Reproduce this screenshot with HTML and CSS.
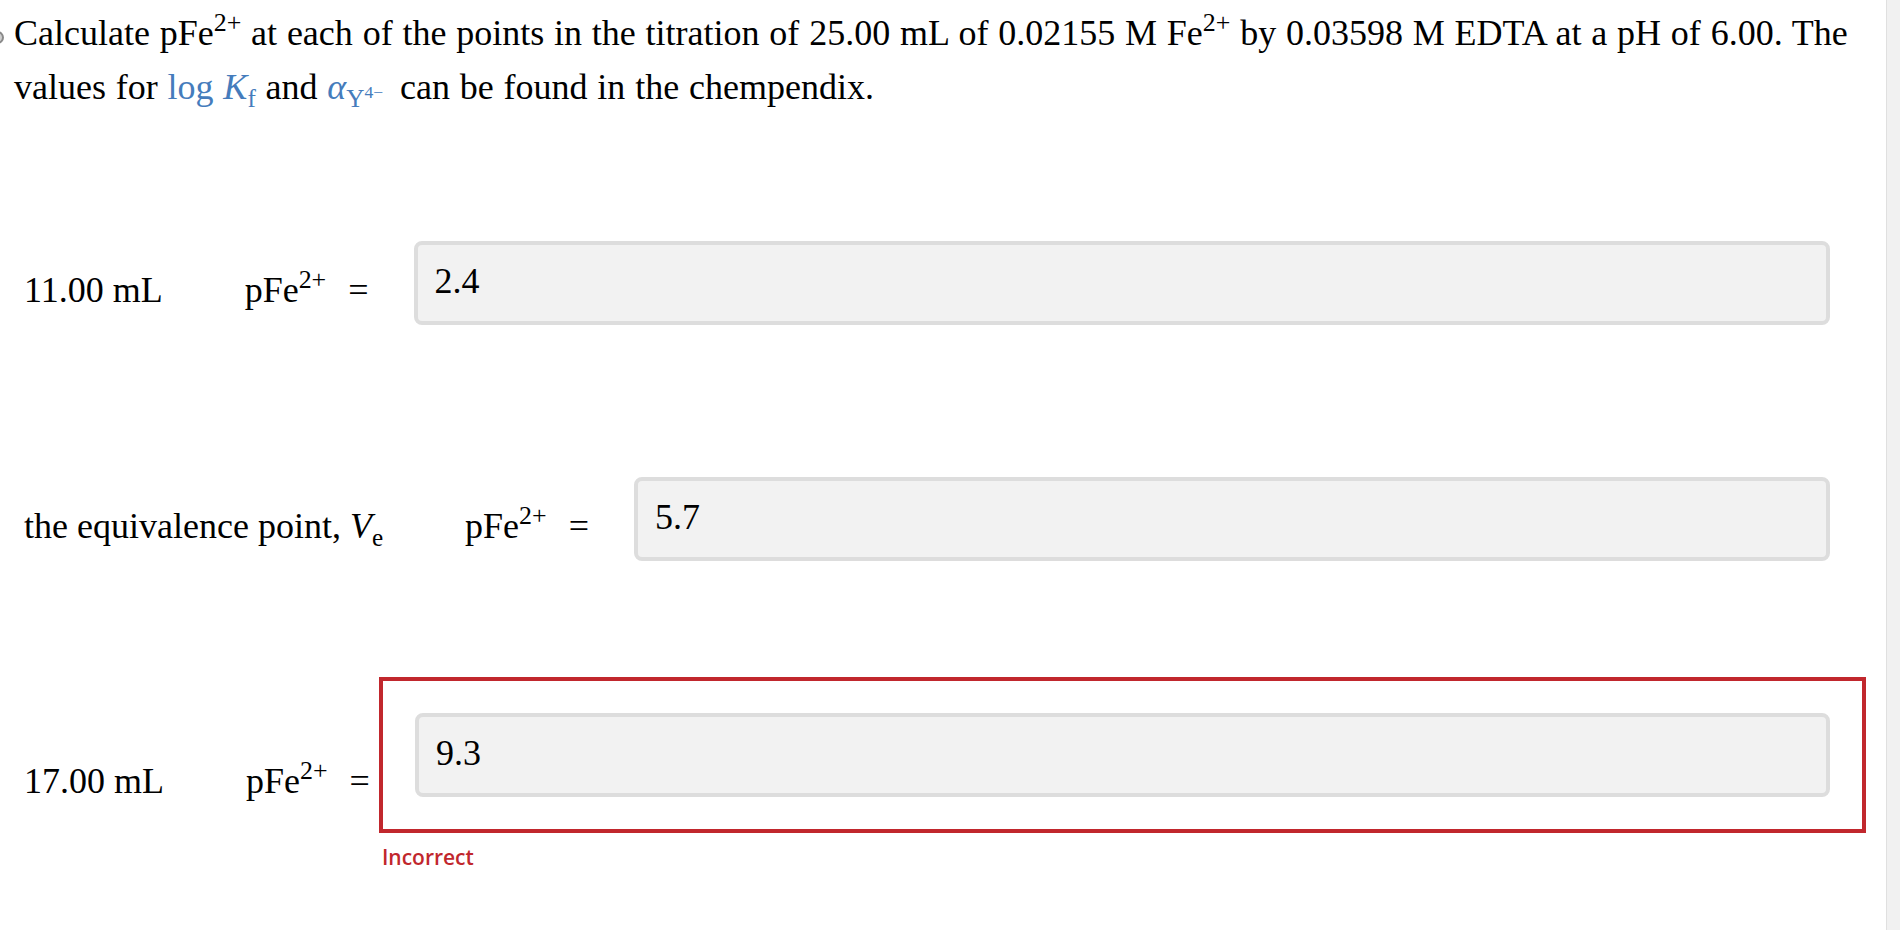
FILE: index.html
```html
<!DOCTYPE html>
<html lang="en">
<head>
<meta charset="utf-8">
<title>Titration pFe</title>
<link rel="stylesheet" href="styles.css">
</head>
<body>
<div class="scroll-track"></div>
<span class="edge-icon"></span>
<main class="question">
  <p class="prompt">Calculate pFe<sup>2+</sup> at each of the points in the titration of 25.00 mL of 0.02155 M Fe<sup>2+</sup> by 0.03598 M EDTA at a pH of 6.00. The values for <span class="ref">log <i>K</i><sub>f</sub></span> and <span class="ref alpha"><i>α</i><sub>Y<sup class="tiny">4−</sup></sub></span> can be found in the chempendix.</p>
  <div class="rows">
    <div class="row">
      <div class="label">
        <span class="point">11.00 mL</span>
        <span class="quantity">pFe<sup>2+</sup><span class="eq">=</span></span>
      </div>
      <div class="answer">
        <div class="frame"><div class="field">2.4</div></div>
      </div>
    </div>
    <div class="row">
      <div class="label">
        <span class="point">the equivalence point, <i>V</i><sub>e</sub></span>
        <span class="quantity">pFe<sup>2+</sup><span class="eq">=</span></span>
      </div>
      <div class="answer">
        <div class="frame"><div class="field">5.7</div></div>
      </div>
    </div>
    <div class="row">
      <div class="label">
        <span class="point">17.00 mL</span>
        <span class="quantity">pFe<sup>2+</sup><span class="eq">=</span></span>
      </div>
      <div class="answer">
        <div class="frame incorrect"><div class="field">9.3</div></div>
        <div class="feedback">Incorrect</div>
      </div>
    </div>
  </div>
</main>
</body>
</html>
```
FILE: styles.css
```css
* { box-sizing: border-box; }

body {
  margin: 0;
  background: #ffffff;
  color: #000000;
  font-family: "Liberation Serif", "Times New Roman", serif;
}

.scroll-track {
  position: fixed;
  top: 0;
  right: 0;
  bottom: 0;
  width: 14px;
  background: #f1f1f1;
  border-left: 1px solid #e0e0e0;
}

.edge-icon {
  position: absolute;
  left: -9px;
  top: 31px;
  width: 13px;
  height: 13px;
  border-radius: 50%;
  border: 2px solid #8a8a8a;
  background: #cfcfcf;
}

.question {
  width: 1866px;
  padding: 6px 0 0 14px;
}

.prompt {
  margin: 0;
  font-size: 36px;
  line-height: 54px;
  word-spacing: 0.8px;
}

sup {
  font-size: 0.72em;
  vertical-align: 0.55em;
  line-height: 0;
}

sub {
  font-size: 0.7em;
  vertical-align: -0.3em;
  line-height: 0;
}

sup.tiny {
  font-size: 0.7em;
  vertical-align: 0.5em;
}

.ref {
  color: #457cbc;
}

.alpha {
  margin-right: 7px;
}

.rows {
  margin-top: 91px;
  padding-left: 10px;
  display: flex;
  flex-direction: column;
  gap: 80px;
}

.row {
  display: flex;
  align-items: center;
  font-size: 36px;
}

.label {
  display: flex;
  align-items: baseline;
  gap: 82px;
  padding-top: 13px;
  margin-right: 9px;
  white-space: nowrap;
}

.eq {
  margin-left: 22px;
}

.answer {
  flex: 1;
  display: flex;
  flex-direction: column;
}

.frame {
  border: 4px solid transparent;
  padding: 32px;
}

.frame.incorrect {
  border-color: #c1272d;
}

.field {
  height: 84px;
  border: 4px solid #dddddd;
  border-radius: 8px;
  background: #f2f2f2;
  padding: 16px 17px 0;
  font-size: 36px;
  line-height: 41px;
}

.feedback {
  margin-top: 10px;
  padding-left: 3px;
  font-family: "Open Sans", "Liberation Sans", sans-serif;
  font-weight: 600;
  font-size: 21px;
  color: #c1272d;
}
```
